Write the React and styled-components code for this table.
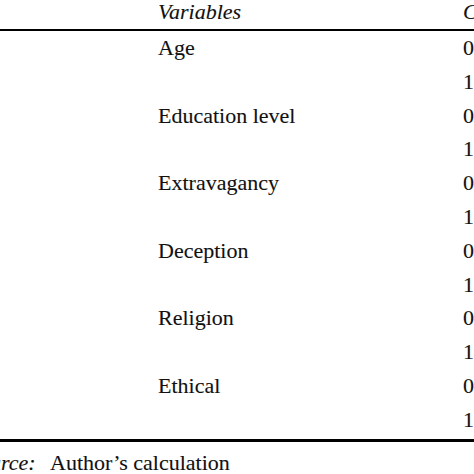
import React from "react";
import styled, { createGlobalStyle } from "styled-components";

const GlobalStyle = createGlobalStyle`
  html, body {
    margin: 0;
    padding: 0;
    background: #ffffff;
    overflow: hidden;
  }
  body {
    font-family: "Liberation Serif", "Times New Roman", serif;
    color: #111111;
    -webkit-text-stroke: 0.1px #111111;
  }
`;

export default function App() {
  return (
    <Page>
      <GlobalStyle />
      <Table>
        <HeadRow>
          <Cell />
          <HeadCell>Variables</HeadCell>
          <HeadCell>Code</HeadCell>
        </HeadRow>
        <Body>
          {rows.map((r, i) => (
            <Row key={i}>
              <Cell />
              <Cell>{r.name}</Cell>
              <Cell>{r.value}</Cell>
            </Row>
          ))}
        </Body>
      </Table>
      <Note>
        <NoteLabel>Source:</NoteLabel>
        <NoteText>Author’s calculation</NoteText>
      </Note>
    </Page>
  );
}

const Page = styled.div`
  width: 474px;
  height: 474px;
  overflow: hidden;
`;

const Table = styled.div`
  width: 560px;
  font-size: 22px;
`;

const HeadRow = styled.div`
  display: grid;
  grid-template-columns: 158px 305px 1fr;
  line-height: 24px;
  padding-bottom: 5px;
  border-bottom: 2px solid #000000;
`;

const HeadCell = styled.div`
  font-style: italic;
  white-space: nowrap;
`;

const Body = styled.div`
  padding-bottom: 2.5px;
  border-bottom: 3px solid #000000;
`;

const Row = styled.div`
  display: grid;
  grid-template-columns: 158px 305px 1fr;
  line-height: 33.8px;
`;

const Cell = styled.div`
  white-space: nowrap;
`;

const Note = styled.div`
  display: flex;
  font-size: 22px;
  line-height: 26px;
  margin-top: 8px;
  margin-left: -32px;
`;

const NoteLabel = styled.span`
  font-style: italic;
  width: 82px;
`;

const NoteText = styled.span`
  white-space: nowrap;
`;

const rows = [
  { name: "Age", value: "0" },
  { name: "", value: "1" },
  { name: "Education level", value: "0" },
  { name: "", value: "1" },
  { name: "Extravagancy", value: "0" },
  { name: "", value: "1" },
  { name: "Deception", value: "0" },
  { name: "", value: "1" },
  { name: "Religion", value: "0" },
  { name: "", value: "1" },
  { name: "Ethical", value: "0" },
  { name: "", value: "1" },
];
